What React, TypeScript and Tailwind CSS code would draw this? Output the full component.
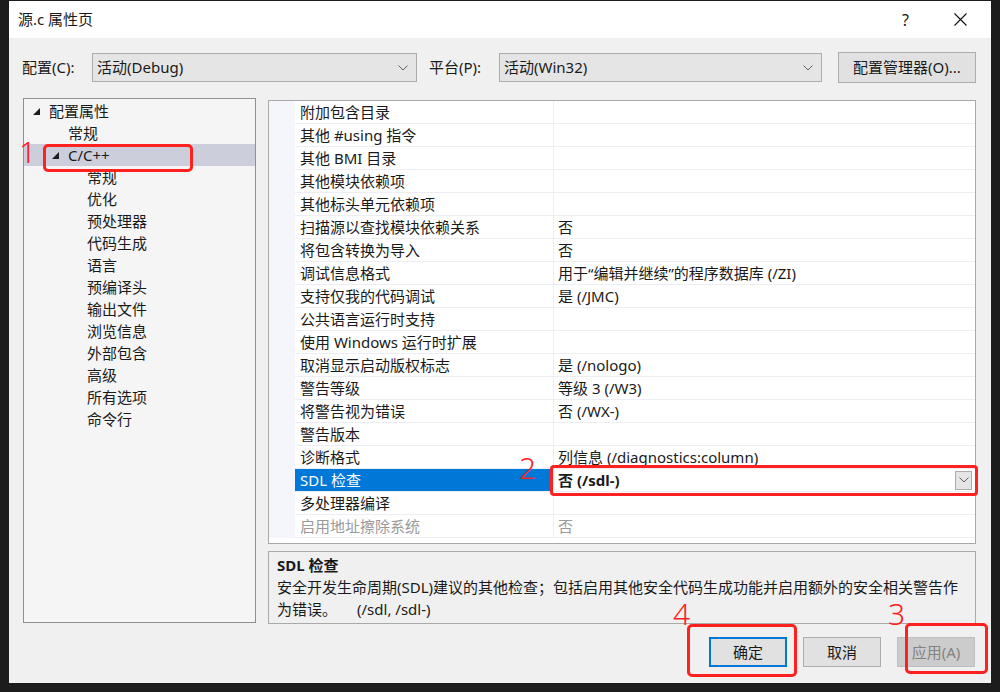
import React from 'react';

type Row = { name: string; value: string; selected?: boolean; disabled?: boolean };

const rows: Row[] = [
  { name: '附加包含目录', value: '' },
  { name: '其他 #using 指令', value: '' },
  { name: '其他 BMI 目录', value: '' },
  { name: '其他模块依赖项', value: '' },
  { name: '其他标头单元依赖项', value: '' },
  { name: '扫描源以查找模块依赖关系', value: '否' },
  { name: '将包含转换为导入', value: '否' },
  { name: '调试信息格式', value: '用于“编辑并继续”的程序数据库 (/ZI)' },
  { name: '支持仅我的代码调试', value: '是 (/JMC)' },
  { name: '公共语言运行时支持', value: '' },
  { name: '使用 Windows 运行时扩展', value: '' },
  { name: '取消显示启动版权标志', value: '是 (/nologo)' },
  { name: '警告等级', value: '等级 3 (/W3)' },
  { name: '将警告视为错误', value: '否 (/WX-)' },
  { name: '警告版本', value: '' },
  { name: '诊断格式', value: '列信息 (/diagnostics:column)' },
  { name: 'SDL 检查', value: '否 (/sdl-)', selected: true },
  { name: '多处理器编译', value: '' },
  { name: '启用地址擦除系统', value: '否', disabled: true },
];

const children = ['常规', '优化', '预处理器', '代码生成', '语言', '预编译头', '输出文件', '浏览信息', '外部包含', '高级', '所有选项', '命令行'];

const Chevron = () => (
  <svg width="10" height="6" viewBox="0 0 10 6" className="shrink-0">
    <path d="M0.5 0.5 L5 5 L9.5 0.5" fill="none" stroke="#606060" strokeWidth="1" />
  </svg>
);

const Tri = () => (
  <svg width="7" height="7" viewBox="0 0 7 7" className="shrink-0">
    <polygon points="7,0 7,7 0,7" fill="#1e1e1e" />
  </svg>
);

const Select: React.FC<{ text: string; width: string }> = ({ text, width }) => (
  <div className={`${width} h-[29px] bg-[#e5e5e5] border border-[#acacac] flex items-center pl-[4px] pr-[8px]`}>
    <span className="flex-1">{text}</span>
    <Chevron />
  </div>
);

const Mark: React.FC<{ n: string; className: string }> = ({ n, className }) => (
  <div className={`absolute text-[#ff2020] text-[30px] leading-none font-light ${className}`}>{n}</div>
);

export default function App() {
  return (
    <div
      className="w-[1000px] h-[692px] bg-[#1c1c1c] overflow-hidden relative text-[15px] text-[#1a1a1a]"
      style={{ fontFamily: '"Noto Sans", "Noto Sans CJK SC", sans-serif' }}
    >
      <div className="ml-[9px] mt-[1px] w-[982px] h-[682px] bg-[#f0f0f0] flex flex-col">
        {/* title bar */}
        <div className="h-[37px] bg-white flex items-center pl-[9px] pr-[24px]">
          <span className="flex-1">源.c 属性页</span>
          <span className="mr-[45px] text-[16px]">?</span>
          <svg width="13" height="13" viewBox="0 0 13 13">
            <path d="M0.5 0.5 L12.5 12.5 M12.5 0.5 L0.5 12.5" stroke="#111" strokeWidth="1.1" />
          </svg>
        </div>

        {/* config row */}
        <div className="mt-[14px] h-[31px] flex items-center pl-[13px]">
          <span className="w-[70px]">配置(C):</span>
          <Select text="活动(Debug)" width="w-[325px]" />
          <span className="ml-[12px] w-[70px]">平台(P):</span>
          <Select text="活动(Win32)" width="w-[323px]" />
          <div className="ml-[16px] w-[138px] h-[31px] bg-[#e1e1e1] border border-[#adadad] flex items-center justify-center">
            配置管理器(O)...
          </div>
        </div>

        {/* main */}
        <div className="mt-[15px] flex pl-[14px]">
          <div className="w-[233px] h-[525px] bg-[#f5f5f5] border border-[#8e9096] pt-[1px]">
            <div className="h-[22px] flex items-center pl-[9px] gap-[9px]">
              <Tri />
              <span>配置属性</span>
            </div>
            <div className="h-[22px] flex items-center pl-[44px]">常规</div>
            <div className="h-[22px] flex items-center pl-[28px] gap-[9px] bg-[#cccedb]">
              <Tri />
              <span>C/C++</span>
            </div>
            {children.map((c) => (
              <div key={c} className="h-[22px] flex items-center pl-[63px]">
                {c}
              </div>
            ))}
          </div>

          <div className="ml-[12px] flex flex-col">
            <div className="mt-[2px] w-[708px] h-[444px] bg-white border border-[#a9a9a9]">
              {rows.map((r) => (
                <div key={r.name} className="h-[23px] flex">
                  <div className="w-[26px] bg-[#f4f6fb]" />
                  <div
                    className={`w-[259px] pl-[5px] flex items-center border-b border-r border-[#eceef4] ${
                      r.selected ? 'bg-[#0078d7] text-white' : r.disabled ? 'text-[#9a9a9a]' : ''
                    }`}
                  >
                    {r.name}
                  </div>
                  {r.selected ? (
                    <div className="flex-1 flex items-center pl-[4px] pr-[3px] border-b border-[#eceef4] font-bold">
                      <span className="flex-1">{r.value}</span>
                      <div className="w-[17px] h-[19px] bg-[#e5e5e5] border border-[#acacac] flex items-center justify-center">
                        <Chevron />
                      </div>
                    </div>
                  ) : (
                    <div
                      className={`flex-1 flex items-center pl-[4px] border-b border-[#eceef4] ${
                        r.disabled ? 'text-[#9a9a9a]' : ''
                      }`}
                    >
                      {r.value}
                    </div>
                  )}
                </div>
              ))}
            </div>

            <div className="mt-[7px] w-[708px] h-[73px] border border-[#a9a9a9] pl-[8px] pt-[2px] leading-[22px]">
              <div className="font-bold w-fit">SDL 检查</div>
              <div className="w-fit">安全开发生命周期(SDL)建议的其他检查；包括启用其他安全代码生成功能并启用额外的安全相关警告作</div>
              <div className="w-fit">
                为错误。<span className="ml-[20px]">(/sdl, /sdl-)</span>
              </div>
            </div>
          </div>
        </div>

        {/* buttons */}
        <div className="mt-[13px] flex justify-end gap-[16px] pr-[16px]">
          <div className="w-[78px] h-[30px] bg-[#e1e1e1] border-2 border-[#0078d7] flex items-center justify-center">确定</div>
          <div className="w-[78px] h-[30px] bg-[#e1e1e1] border border-[#adadad] flex items-center justify-center">取消</div>
          <div className="w-[78px] h-[30px] bg-[#cccccc] border border-[#bfbfbf] text-[#838383] flex items-center justify-center">
            应用(A)
          </div>
        </div>
      </div>

      {/* annotations */}
      <div className="absolute left-[43px] top-[144px] w-[150px] h-[28px] border-[3px] border-[#ff2020] rounded-[5px]" />
      <Mark n="1" className="left-[19px] top-[137px]" />
      <div className="absolute left-[550px] top-[465px] w-[428px] h-[31px] border-[3px] border-[#ff2020] rounded-[4px]" />
      <Mark n="2" className="left-[519px] top-[453px]" />
      <div className="absolute left-[905px] top-[623px] w-[83px] h-[51px] border-[3px] border-[#ff2020] rounded-[5px]" />
      <Mark n="3" className="left-[888px] top-[599px]" />
      <div className="absolute left-[687px] top-[624px] w-[110px] h-[53px] border-[3px] border-[#ff2020] rounded-[5px]" />
      <Mark n="4" className="left-[673px] top-[599px]" />
    </div>
  );
}
